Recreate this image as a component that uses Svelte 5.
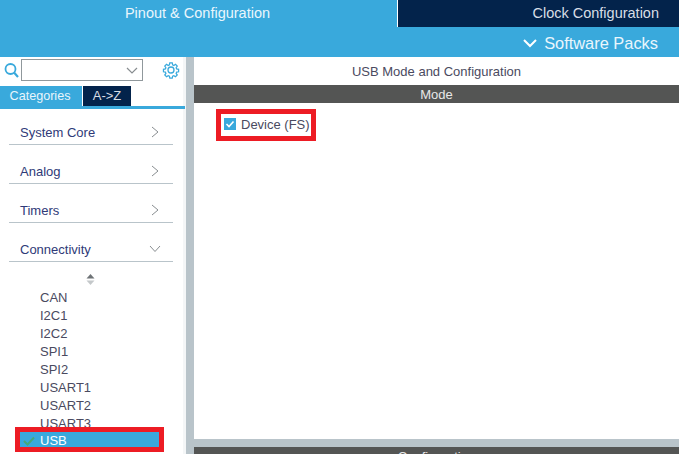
<script>
  const closed = ['System Core', 'Analog', 'Timers'];
  const items = ['CAN', 'I2C1', 'I2C2', 'SPI1', 'SPI2', 'USART1', 'USART2', 'USART3'];
</script>

<div class="app">
  <header>
    <div class="tabs">
      <div class="tab active">Pinout &amp; Configuration</div>
      <div class="tab dark">Clock Configuration</div>
    </div>
    <div class="subbar">
      <svg class="packs-chev" width="16" height="10" viewBox="0 0 16 10"><path d="M2 2 L8 8 L14 2" fill="none" stroke="#fff" stroke-width="2"/></svg>
      <span>Software Packs</span>
    </div>
  </header>

  <div class="main">
    <aside>
      <div class="search">
        <svg width="17" height="18" viewBox="0 0 17 18"><circle cx="6.5" cy="8" r="5" fill="none" stroke="#39a9dc" stroke-width="1.8"/><path d="M10.2 11.8 L14 16" stroke="#39a9dc" stroke-width="2.2"/></svg>
        <div class="combo">
          <svg width="12" height="7" viewBox="0 0 12 7"><path d="M1 1 L6 6 L11 1" fill="none" stroke="#888d90" stroke-width="1.2"/></svg>
        </div>
        <svg class="gear" width="18" height="18" viewBox="0 0 18 18">
          <circle cx="9" cy="9" r="3" fill="none" stroke="#39a9dc" stroke-width="1.3"/>
          <path d="M7.6 1 h2.8 l.4 2.2 1.4.6 1.9-1.3 2 2-1.3 1.9.6 1.4 2.2.4 v2.8 l-2.2.4-.6 1.4 1.3 1.9-2 2-1.9-1.3-1.4.6-.4 2.2 h-2.8 l-.4-2.2-1.4-.6-1.9 1.3-2-2 1.3-1.9-.6-1.4-2.2-.4 v-2.8 l2.2-.4.6-1.4-1.3-1.9 2-2 1.9 1.3 1.4-.6z" transform="translate(1.1 1.1) scale(.88)" fill="none" stroke="#39a9dc" stroke-width="1.4"/>
        </svg>
      </div>
      <div class="seg">
        <div class="seg-a">Categories</div>
        <div class="seg-b">A-&gt;Z</div>
      </div>
      <div class="acc">
        {#each closed as c}
          <div class="row">
            <span>{c}</span>
            <svg width="8" height="12" viewBox="0 0 8 12"><path d="M1 1 L7 6 L1 11" fill="none" stroke="#888d90" stroke-width="1"/></svg>
          </div>
        {/each}
        <div class="row">
          <span>Connectivity</span>
          <svg class="open" width="12" height="8" viewBox="0 0 12 8"><path d="M1 1 L6 6.5 L11 1" fill="none" stroke="#888d90" stroke-width="1"/></svg>
        </div>
      </div>
      <div class="sort">
        <svg width="9" height="11" viewBox="0 0 9 11"><path d="M4.5 0 L8.5 4.5 H.5z" fill="#6e7376"/><path d="M4.5 11 L8.5 6.5 H.5z" fill="#c4c8ca"/></svg>
      </div>
      <ul>
        {#each items as it}
          <li>{it}</li>
        {/each}
        <li class="sel">
          <svg width="12" height="10" viewBox="0 0 12 10"><path d="M1 5 L4.5 8.5 L11 1.5" fill="none" stroke="#45a97a" stroke-width="2"/></svg>
          <span>USB</span>
          <i class="mark usb-mark"></i>
        </li>
      </ul>
    </aside>
    <div class="light"></div>
    <div class="split"></div>
    <section>
      <div class="title">USB Mode and Configuration</div>
      <div class="band">Mode</div>
      <div class="body">
        <div class="device">
          <span class="check">
            <svg width="12" height="12" viewBox="0 0 12 12"><path d="M2.5 6 L5 8.5 L9.5 3.5" fill="none" stroke="#fff" stroke-width="1.6"/></svg>
          </span>
          <span>Device (FS)</span>
          <i class="mark dev-mark"></i>
        </div>
      </div>
      <div class="gap"></div>
      <div class="band low">Configuration</div>
    </section>
  </div>
</div>

<style>
  :global(body) { margin: 0; background: #fff; overflow: hidden; }
  .app {
    width: 679px; height: 454px; overflow: hidden; display: flex; flex-direction: column;
    font-family: "Liberation Sans", Arial, sans-serif; color: #3c3c5a; font-size: 13px;
  }
  header { background: #39a9dc; color: #fff; height: 57px; flex: none; }
  .tabs { display: flex; height: 27px; }
  .tab { font-size: 14.5px; line-height: 27px; text-align: center; }
  .active { width: 395px; padding-right: 2px; color: #eaf6fc; }
  .dark { flex: 1; background: #03234b; border-left: 1px solid #fff; color: #d8dee6; text-align: right; padding-right: 20px; }
  .subbar { height: 30px; box-sizing: border-box; padding: 3px 21px 0 0; display: flex; align-items: center; justify-content: flex-end; gap: 6px; font-size: 16.4px; color: #eaf6fc; }
  .packs-chev { margin-top: -1px; }
  .main { flex: 1; display: flex; min-height: 0; }
  aside { width: 183px; flex: none; display: flex; flex-direction: column; position: relative; }
  .light { width: 3px; background: #f4f6f7; flex: none; }
  .split { width: 8px; background: #b9c4ca; flex: none; }
  .search { display: flex; align-items: center; height: 26px; padding: 0 0 0 4px; }
  .combo { height: 22px; border: 1px solid #90989c; box-sizing: border-box; width: 122px; display: flex; align-items: center; justify-content: flex-end; padding-right: 4px; }
  .gear { margin-left: 19px; }
  .seg { display: flex; height: 20px; margin-top: 3px; gap: 1px; line-height: 20px; }
  .seg-a { width: 80px; padding-right: 2px; background: #39a9dc; color: #e8f5fb; text-align: center; font-size: 12.6px; }
  .seg-b { width: 48px; background: #03234b; color: #d8dee6; text-align: center; }
  .acc { border-top: 3px solid #39a9dc; margin-right: -2px; padding: 0 12px 0 9px; }
  .row { height: 39px; box-sizing: border-box; border-bottom: 1px solid #b9c4ca; display: flex; justify-content: space-between; align-items: flex-end; padding: 0 14px 4px 11px; line-height: 14px; color: #2f3a78; width: 164px; }
  .row svg { margin-bottom: 2px; }
  .row svg.open { margin-right: -2px; margin-bottom: 4px; }
  .acc .row:first-child { height: 36px; }
  .sort { height: 27px; display: flex; justify-content: center; align-items: center; padding: 8px 2px 0 0; box-sizing: border-box; }
  ul { list-style: none; margin: 0; padding: 0; }
  li { height: 18px; line-height: 18px; padding-left: 40px; color: #4a4a60; }
  li.sel { position: relative; margin: -1px 0 0 20px; width: 139px; height: 15px; padding-left: 20px; box-sizing: border-box; background: #39a9dc; color: #fff; line-height: 17px; }
  li.sel svg { position: absolute; left: 3px; top: 4px; }
  .mark { position: absolute; box-sizing: border-box; border: 5px solid #ed1c24; pointer-events: none; }
  .usb-mark { left: -5px; top: -5px; width: 149px; height: 25px; }
  section { flex: 1; display: flex; flex-direction: column; min-width: 0; }
  .title { height: 28px; line-height: 29px; text-align: center; color: #4a4a60; }
  .band { height: 18px; flex: none; line-height: 19px; background: #545554; color: #e8e8e8; text-align: center; }
  .body { flex: 1; padding: 6px 0 0 27px; }
  .device { position: relative; display: flex; align-items: center; gap: 5px; height: 22px; width: 90px; margin-top: 5px; padding-bottom: 2px; box-sizing: border-box; color: #4a4a60; }
  .check { width: 12px; height: 12px; background: #39a9dc; display: flex; margin-left: 3px; }
  .dev-mark { left: -5px; top: -5px; width: 100px; height: 32px; }
  .gap { height: 8px; flex: none; background: #b9c4ca; }
  .low { height: 7px; overflow: hidden; }
</style>
